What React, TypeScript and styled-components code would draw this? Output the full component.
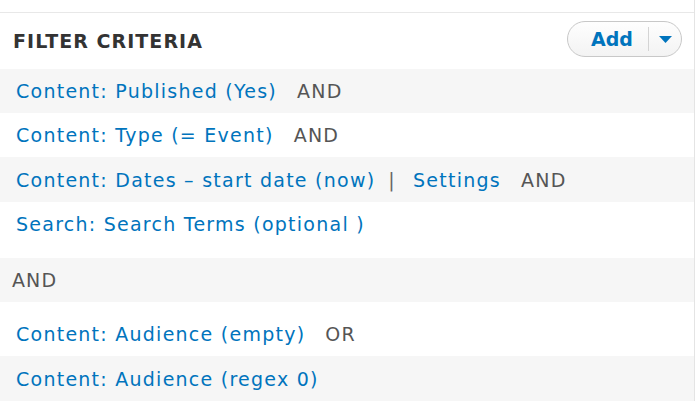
import React from 'react';
import styled, {createGlobalStyle} from 'styled-components';

const GlobalStyle = createGlobalStyle`
  body {
    margin: 0;
    background: #fff;
    font-family: "DejaVu Sans", Verdana, sans-serif;
  }
`;

const Panel = styled.div`
  width: 694px;
  border-right: 1px solid #e4e4e4;
  min-height: 401px;
  background: #fff;
`;

const TopStrip = styled.div`
  height: 12px;
  border-bottom: 1px solid #e8e8e8;
`;

const Header = styled.div`
  height: 56px;
  padding: 0 13px 0 13px;
  display: flex;
  align-items: center;
  justify-content: space-between;
`;

const Title = styled.h2`
  margin: 0;
  font-size: 19px;
  font-weight: 700;
  color: #333;
  letter-spacing: 1.05px;
`;

const AddButton = styled.div`
  display: flex;
  align-items: center;
  height: 36px;
  width: 115px;
  box-sizing: border-box;
  border: 1px solid #c8c8c8;
  border-radius: 18px;
  background: linear-gradient(#fefefe, #f3f3f3);
  margin-top: -4px;
  margin-right: -1px;
`;

const AddLabel = styled.span`
  flex: 1;
  text-align: center;
  padding-left: 8px;
  font-size: 19px;
  font-weight: 700;
  color: #0074bd;
`;

const Toggle = styled.span`
  width: 32px;
  height: 24px;
  border-left: 1px solid #d4d4d4;
  display: flex;
  align-items: center;
  justify-content: center;
`;

const Group = styled.div<{$padTop?: number; $padBottom?: number}>`
  padding-top: ${p => p.$padTop ?? 0}px;
  padding-bottom: ${p => p.$padBottom ?? 0}px;
`;

const Row = styled.div<{$striped?: boolean; $h?: number}>`
  height: ${p => p.$h ?? 44}px;
  display: flex;
  align-items: center;
  padding-left: 16px;
  background: ${p => (p.$striped ? '#f6f6f6' : '#fff')};
  font-size: 19px;
  letter-spacing: 1.25px;
`;

const Operator = styled.div`
  height: 44px;
  display: flex;
  align-items: center;
  padding-left: 12px;
  background: #f6f6f6;
  font-size: 19px;
  letter-spacing: 1.1px;
  color: #555;
`;

const FilterLink = styled.a`
  color: #0074bd;
  text-decoration: none;
`;

const Conj = styled.span`
  color: #555;
  margin-left: 20px;
`;

const Pipe = styled.span`
  color: #666;
  margin: 0 17px 0 13px;
`;

interface Filter {
  label: string;
  conj?: string;
  settings?: boolean;
  h?: number;
}

const groupOne: Filter[] = [
  {label: 'Content: Published (Yes)', conj: 'AND'},
  {label: 'Content: Type (= Event)', conj: 'AND'},
  {label: 'Content: Dates – start date (now)', conj: 'AND', settings: true, h: 45},
  {label: 'Search: Search Terms (optional )'},
];

const groupTwo: Filter[] = [
  {label: 'Content: Audience (empty)', conj: 'OR'},
  {label: 'Content: Audience (regex 0)', h: 45},
];

const renderRows = (filters: Filter[], stripeFirst: boolean) =>
  filters.map((f, i) => (
    <Row key={i} $striped={(i % 2 === 0) === stripeFirst} $h={f.h}>
      <FilterLink href="#">{f.label}</FilterLink>
      {f.settings && (
        <>
          <Pipe>|</Pipe>
          <FilterLink href="#">Settings</FilterLink>
        </>
      )}
      {f.conj && <Conj>{f.conj}</Conj>}
    </Row>
  ));

export default function App() {
  return (
    <>
      <GlobalStyle />
      <Panel>
        <TopStrip />
        <Header>
          <Title>FILTER CRITERIA</Title>
          <AddButton>
            <AddLabel>Add</AddLabel>
            <Toggle>
              <svg width="13" height="7" viewBox="0 0 13 7">
                <path d="M0 0 H13 L6.5 7 Z" fill="#0074bd" />
              </svg>
            </Toggle>
          </AddButton>
        </Header>
        <Group $padBottom={12}>{renderRows(groupOne, true)}</Group>
        <Operator>AND</Operator>
        <Group $padTop={10}>{renderRows(groupTwo, false)}</Group>
      </Panel>
    </>
  );
}
